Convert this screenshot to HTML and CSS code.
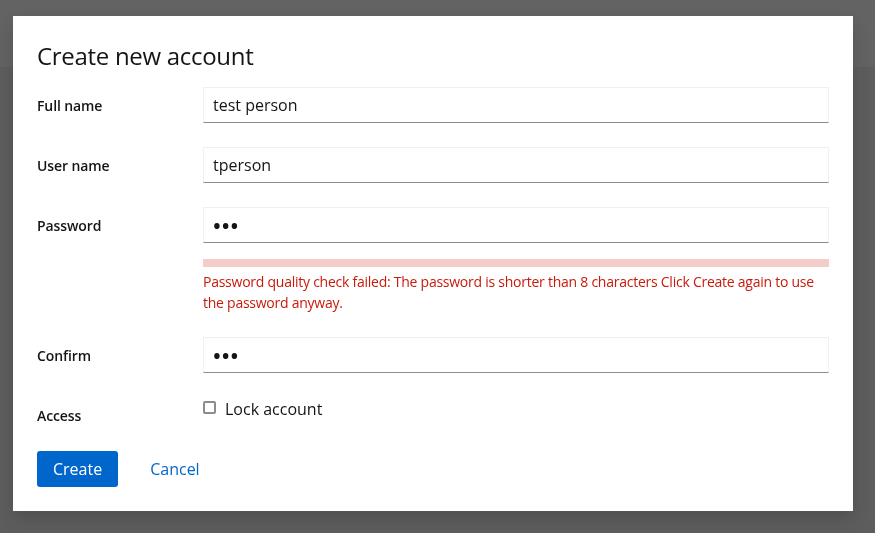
FILE: index.html
```html
<!DOCTYPE html>
<html lang="en">
<head>
    <meta charset="UTF-8">
    <meta name="viewport" content="width=device-width, initial-scale=1.0">
    <title>Accounts</title>
    <link rel="stylesheet" href="styles.css">
</head>
<body>
    <div class="page">
        <div class="page-header"></div>
    </div>

    <div class="backdrop">
        <div class="modal" role="dialog" aria-labelledby="dialog-title">
            <h1 id="dialog-title">Create new account</h1>

            <form class="form" onsubmit="return false">
                <label class="form-label" for="accounts-create-real-name">Full name</label>
                <div class="form-control">
                    <input id="accounts-create-real-name" type="text" value="test person">
                </div>

                <label class="form-label" for="accounts-create-user-name">User name</label>
                <div class="form-control">
                    <input id="accounts-create-user-name" type="text" value="tperson">
                </div>

                <label class="form-label" for="accounts-create-password">Password</label>
                <div class="form-control">
                    <input id="accounts-create-password" type="password" value="abc">
                    <div class="strength-meter"><div class="strength-fill"></div></div>
                    <div class="helper-error">Password quality check failed: The password is shorter than 8 characters Click Create again to use the password anyway.</div>
                </div>

                <label class="form-label" for="accounts-create-confirm">Confirm</label>
                <div class="form-control">
                    <input id="accounts-create-confirm" type="password" value="abc">
                </div>

                <span class="form-label">Access</span>
                <div class="form-control">
                    <label class="check">
                        <input type="checkbox" id="accounts-create-locked">
                        <span>Lock account</span>
                    </label>
                </div>
            </form>

            <footer class="modal-footer">
                <button class="btn btn-primary">Create</button>
                <button class="btn btn-link">Cancel</button>
            </footer>
        </div>
    </div>
</body>
</html>
```

FILE: styles.css
```css
html, body {
    margin: 0;
    height: 100%;
}
body {
    font-family: "Open Sans", "Noto Sans", sans-serif;
    color: #151515;
    background: #f0f0f0;
    overflow: hidden;
}
.page-header {
    height: 67px;
    background: #ffffff;
}

/* dimmed layer over the page */
.backdrop {
    position: fixed;
    inset: 0;
    background: rgba(3, 3, 3, 0.62);
    padding: 16px 22px 0 13px;
}
.modal {
    background: #fff;
    padding: 24px;
    box-shadow: 0 0.5rem 1rem rgba(3, 3, 3, 0.16);
}
.modal h1 {
    margin: 0 0 16px;
    font-size: 24px;
    font-weight: 400;
    line-height: 31px;
    letter-spacing: -0.3px;
}

.form {
    display: grid;
    grid-template-columns: 150px 1fr;
    column-gap: 16px;
    row-gap: 24px;
}
.form-label {
    font-size: 14px;
    font-weight: 600;
    line-height: 21px;
    padding-top: 8px;
    letter-spacing: -0.1px;
}
.form-control input[type="text"],
.form-control input[type="password"] {
    display: block;
    box-sizing: border-box;
    width: 100%;
    height: 36px;
    margin: 0;
    padding: 5px 9px;
    font-family: inherit;
    font-size: 16px;
    color: #151515;
    border: 1px solid #f0f0f0;
    border-bottom-color: #8a8d90;
    border-radius: 0;
    outline: none;
}
.form-control input[type="password"] {
    font-size: 26px;
    letter-spacing: -1px;
    padding-left: 8px;
}
.strength-meter {
    margin-top: 16px;
    height: 8px;
    background: #f4cdcb;
}
.strength-fill {
    width: 0;
    height: 100%;
    background: #c9190b;
}
.helper-error {
    margin-top: 4px;
    font-size: 14px;
    line-height: 21px;
    color: #c9190b;
    letter-spacing: -0.25px;
}

.check {
    display: flex;
    align-items: flex-start;
    gap: 9px;
    font-size: 16px;
    line-height: 24px;
    color: #151515;
}
.check input {
    appearance: none;
    flex: none;
    width: 13px;
    height: 13px;
    margin: 4px 0 0 0;
    border: 2px solid #8a8d90;
    border-radius: 2px;
    background: #fff;
}

.modal-footer {
    display: flex;
    gap: 16px;
    margin-top: 25px;
}
.btn {
    font-family: inherit;
    font-size: 16px;
    line-height: 24px;
    padding: 6px 16px;
    border: none;
    border-radius: 3px;
    cursor: pointer;
}
.btn-primary {
    background: #0066cc;
    color: #fff;
}
.btn-primary:hover {
    background: #004080;
}
.btn-link {
    background: none;
    color: #0066cc;
}
```
